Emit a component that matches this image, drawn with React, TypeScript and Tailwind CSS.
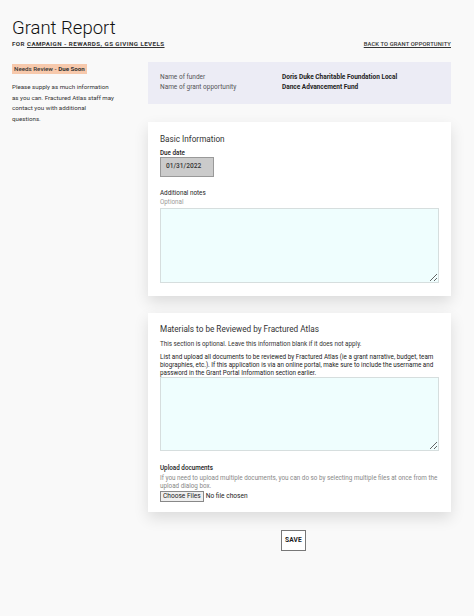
import React from "react";

export default function App() {
  const font = { fontFamily: "Roboto, 'Liberation Sans', sans-serif" };
  return (
    <div className="min-h-[616px] w-[474px] bg-[#f9f9f9] text-[#222]" style={font}>
      <div className="px-[12px] pt-[18px]">
        <h1 className="text-[18.5px] font-light leading-[20px] text-[#111]">Grant Report</h1>
        <div className="mt-[2px] flex items-center justify-between text-[6.2px] font-bold leading-[8px] tracking-[0.07em] text-[#333]">
          <div>
            FOR <span className="underline underline-offset-[1px]">CAMPAIGN - REWARDS, GS GIVING LEVELS</span>
          </div>
          <div className="mr-[11px] text-[5.8px] font-medium tracking-[0.02em] underline underline-offset-[1px]">BACK TO GRANT OPPORTUNITY</div>
        </div>
      </div>

      <div className="mt-[14px] flex px-[12px]">
        <div className="w-[136px] shrink-0">
          <div className="mt-[2px] w-fit bg-[#f7c9ac] px-[2px] py-[1px] text-[6.2px] font-medium leading-[8px] text-[#333]">
            Needs Review - <span className="font-bold">Due Soon</span>
          </div>
          <p className="mt-[8px] w-[104px] text-[6.2px] leading-[10.5px] text-[#333]">
            Please supply as much information as you can. Fractured Atlas staff may contact you with additional questions.
          </p>
        </div>

        <div className="flex w-[303px] flex-col">
          <div className="bg-[#ececf5] px-[12px] pb-[12px] pt-[10px] text-[6.5px] leading-[10px]">
            <div className="grid grid-cols-[122px_1fr]">
              <div className="text-[#555]">Name of funder</div>
              <div className="font-bold text-[#222]">Doris Duke Charitable Foundation Local</div>
              <div className="text-[#555]">Name of grant opportunity</div>
              <div className="font-bold text-[#222]">Dance Advancement Fund</div>
            </div>
          </div>

          <div className="mt-[18px] bg-white px-[12px] pb-[13px] pt-[12px] shadow-[0_6px_14px_rgba(0,0,0,0.12)]">
            <div className="text-[8.2px] leading-[10px] text-[#333]">Basic Information</div>
            <div className="mt-[5px] text-[6.3px] font-medium leading-[8px] text-[#222]">Due date</div>
            <div className="flex h-[20px] w-[54px] items-center border border-[#999] bg-[#cbcbcb] px-[5px] text-[6.6px] font-medium text-[#333]">
              01/31/2022
            </div>
            <div className="mt-[12px] text-[6.3px] leading-[8px] text-[#222]">Additional notes</div>
            <div className="mt-[1px] text-[6.3px] leading-[8px] text-[#999]">Optional</div>
            <textarea className="mt-[2px] block h-[75px] w-full border border-[#d6dede] bg-[#effefe]" />
          </div>

          <div className="mt-[17px] bg-white px-[12px] pb-[10px] pt-[11px] shadow-[0_6px_14px_rgba(0,0,0,0.12)]">
            <div className="text-[8.2px] leading-[10px] text-[#333]">Materials to be Reviewed by Fractured Atlas</div>
            <div className="mt-[6px] text-[6.3px] leading-[8px] text-[#333]">
              This section is optional. Leave this information blank if it does not apply.
            </div>
            <div className="mt-[5px] text-[6.3px] leading-[8px] text-[#222]">
              List and upload all documents to be reviewed by Fractured Atlas (ie a grant narrative, budget, team biographies, etc.). If this application is via an online portal, make sure to include the username and password in the Grant Portal Information section earlier.
            </div>
            <textarea className="block h-[74px] w-full border border-[#d6dede] bg-[#effefe]" />
            <div className="mt-[13px] text-[6.3px] font-medium leading-[8px] text-[#222]">Upload documents</div>
            <div className="mt-[2px] text-[6.3px] leading-[8px] text-[#888]">
              If you need to upload multiple documents, you can do so by selecting multiple files at once from the upload dialog box.
            </div>
            <div className="mt-[1px] flex items-center text-[6.6px] text-[#222]">
              <span className="border border-[#888] bg-[#efefef] px-[2px] leading-[9px]">Choose Files</span>
              <span className="ml-[2px]">No file chosen</span>
            </div>
          </div>

          <div className="mt-[18px] flex justify-center pr-[12px]">
            <button className="flex h-[21px] w-[25px] items-center justify-center border border-[#777] bg-white text-[6.6px] font-bold tracking-[0.03em] text-[#222]">
              SAVE
            </button>
          </div>
        </div>
      </div>
    </div>
  );
}
